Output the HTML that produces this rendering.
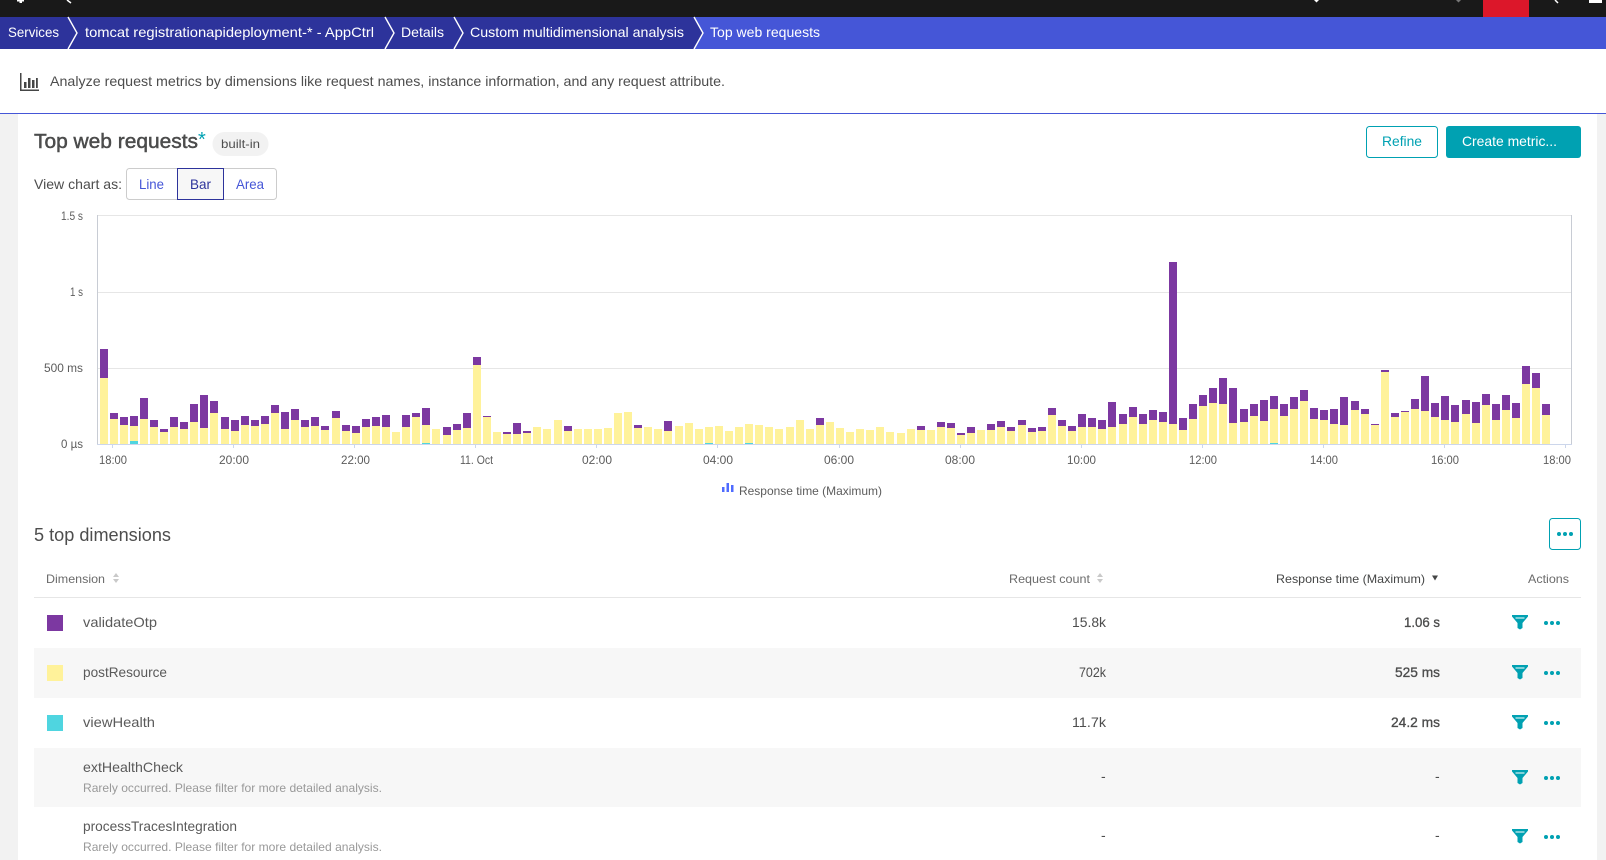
<!DOCTYPE html>
<html lang="en">
<head>
<meta charset="utf-8">
<title>Top web requests</title>
<style>
html,body{margin:0;padding:0;background:#fff;width:1606px;height:860px;overflow:hidden}
svg{display:block}
text{font-family:"Liberation Sans",sans-serif;fill:#4d4d4d;font-size:14px;white-space:pre}
.bc{fill:#fff}
.ax{font-size:12px;fill:#5c5c5c}
.hd{font-size:12px;fill:#6b6b6b}
.sub{font-size:12px;fill:#999}
.dim{fill:#5a5a5a}
.med{stroke:#454646;stroke-width:.3px}
</style>
</head>
<body>
<svg xmlns="http://www.w3.org/2000/svg" width="1606" height="860" viewBox="0 0 1606 860">
<defs>
<g id="fn"><path fill="#00a1b2" d="M0 0H16V1.5L10.5 8V13L8 14.5L5.5 13V8L0 1.5Z"/><path stroke="#fff" stroke-width="1" d="M3.5 3H12.5"/></g>
<g id="dots" fill="#00a1b2"><circle cx="2" cy="0" r="2"/><circle cx="8" cy="0" r="2"/><circle cx="14" cy="0" r="2"/></g>
<g id="srt" fill="#c9c9c9"><path d="M0 4L3 0L6 4Z"/><path d="M0 6L3 10L6 6Z"/></g>
</defs>

<!-- page background -->
<rect width="1606" height="860" fill="#f2f2f2"/>
<rect x="18" y="113" width="1579" height="747" fill="#fff"/>

<!-- top bar -->
<rect width="1606" height="17" fill="#191919"/>
<path fill="#fff" d="M17 0H24V1.5H22V3H19.5V1.5H17Z"/>
<path stroke="#fff" stroke-width="1.5" fill="none" d="M67 0L71 3"/>
<path fill="#fff" d="M1314 0H1319L1316.5 2.5Z"/>
<path fill="#777" d="M1456 0H1461L1458.5 2.5Z"/>
<rect x="1483" width="46" height="17" fill="#dc172a"/>
<path stroke="#fff" stroke-width="1.5" fill="none" d="M1555 0L1558 3"/>
<path fill="#fff" d="M1589 0H1602V3H1589Z"/>

<!-- breadcrumb -->
<rect y="17" width="1606" height="32" fill="#4556d7"/>
<path fill="#2d339b" d="M0 17H694L703 33L694 49H0Z"/>
<g fill="none" stroke="#fff" stroke-width="1.4">
<path d="M68 17L77 33L68 49"/>
<path d="M385 17L394 33L385 49"/>
<path d="M454 17L463 33L454 49"/>
<path d="M694 17L703 33L694 49"/>
</g>
<text class="bc" x="8" y="37" textLength="51" lengthAdjust="spacingAndGlyphs">Services</text>
<text class="bc" x="85" y="37" textLength="289" lengthAdjust="spacingAndGlyphs">tomcat registrationapideployment-* - AppCtrl</text>
<text class="bc" x="401" y="37" textLength="43" lengthAdjust="spacingAndGlyphs">Details</text>
<text class="bc" x="470" y="37" textLength="214" lengthAdjust="spacingAndGlyphs">Custom multidimensional analysis</text>
<text class="bc" x="710" y="37" textLength="110" lengthAdjust="spacingAndGlyphs">Top web requests</text>

<!-- description -->
<rect y="49" width="1606" height="64" fill="#fff"/>
<g fill="#454646">
<rect x="20" y="73" width="1.5" height="18"/><rect x="20" y="89.5" width="19" height="1.5"/>
<rect x="24" y="82" width="2.5" height="6"/><rect x="28" y="78" width="2.5" height="10"/><rect x="32" y="80" width="2.5" height="8"/><rect x="36" y="78" width="1.8" height="10"/>
</g>
<text x="50" y="86" textLength="675" lengthAdjust="spacingAndGlyphs">Analyze request metrics by dimensions like request names, instance information, and any request attribute.</text>
<rect y="113" width="1606" height="1" fill="#4556d7"/>

<!-- title row -->
<text x="34" y="148" class="med" style="font-size:20px;stroke-width:.45px" textLength="164" lengthAdjust="spacingAndGlyphs">Top web requests</text>
<text x="198" y="146" style="font-size:20px;fill:#00a1b2">*</text>
<rect x="212.5" y="132" width="56" height="24" rx="12" fill="#f2f2f2"/>
<text x="221" y="148" style="font-size:12px" textLength="39" lengthAdjust="spacingAndGlyphs">built-in</text>

<rect x="1366.5" y="126.5" width="71" height="31" rx="3" fill="#fff" stroke="#00a1b2"/>
<text x="1382" y="146" style="fill:#00a1b2" textLength="40" lengthAdjust="spacingAndGlyphs">Refine</text>
<rect x="1446" y="126" width="135" height="32" rx="3" fill="#00a1b2"/>
<text x="1462" y="146" style="fill:#fff" textLength="95" lengthAdjust="spacingAndGlyphs">Create metric...</text>

<!-- view chart as -->
<text x="34" y="189" textLength="88" lengthAdjust="spacingAndGlyphs">View chart as:</text>
<rect x="126.5" y="168.5" width="150" height="31" rx="3" fill="#fff" stroke="#ccc"/>
<rect x="177.5" y="168.5" width="46" height="31" fill="#f7f7f7" stroke="#2d339b"/>
<text x="139" y="189" style="fill:#4556d7" textLength="25" lengthAdjust="spacingAndGlyphs">Line</text>
<text x="190" y="189" style="fill:#2d339b" textLength="21" lengthAdjust="spacingAndGlyphs">Bar</text>
<text x="236" y="189" style="fill:#4556d7" textLength="28" lengthAdjust="spacingAndGlyphs">Area</text>

<!-- chart grid -->
<g fill="none">
<path stroke="#e6e6e6" d="M97 215.5H1571M97 292.5H1571M97 368.5H1571"/>
<path stroke="#c8ccd4" d="M97.5 215V444M1571.5 215V444"/>
<path stroke="#ccd6eb" d="M97 444.5H1572M112.5 444V448M233.5 444V448M354.5 444V448M475.5 444V448M596.5 444V448M717.5 444V448M839.5 444V448M960.5 444V448M1081.5 444V448M1202.5 444V448M1323.5 444V448M1444.5 444V448M1565.5 444V448"/>
</g>

<!-- bars: heights in 1/3 px -->
<g transform="translate(0,444) scale(1,0.33333)">
<path fill="#7c38a1" d="M100 0v-285h8V0zM110 0v-93h8V0zM120 0v-81h8V0zM130 0v-84h8V0zM140 0v-138h8V0zM150 0v-72h8V0zM160 0v-45h8V0zM170 0v-81h8V0zM180 0v-66h8V0zM190 0v-120h8V0zM200 0v-147h8V0zM210 0v-129h8V0zM221 0v-81h8V0zM231 0v-72h8V0zM241 0v-84h8V0zM251 0v-72h8V0zM261 0v-84h8V0zM271 0v-117h8V0zM281 0v-96h8V0zM291 0v-105h8V0zM301 0v-72h8V0zM311 0v-81h8V0zM321 0v-54h8V0zM332 0v-99h8V0zM342 0v-57h8V0zM352 0v-54h8V0zM362 0v-75h8V0zM372 0v-81h8V0zM382 0v-87h8V0zM402 0v-87h8V0zM412 0v-93h8V0zM422 0v-108h8V0zM443 0v-51h8V0zM453 0v-60h8V0zM463 0v-93h8V0zM473 0v-261h8V0zM483 0v-84h8V0zM503 0v-36h8V0zM513 0v-63h8V0zM523 0v-39h8V0zM564 0v-54h8V0zM634 0v-57h8V0zM664 0v-69h8V0zM816 0v-78h8V0zM917 0v-54h8V0zM937 0v-66h8V0zM947 0v-63h8V0zM957 0v-33h8V0zM967 0v-51h8V0zM987 0v-60h8V0zM997 0v-69h8V0zM1007 0v-51h8V0zM1018 0v-72h8V0zM1028 0v-48h8V0zM1038 0v-51h8V0zM1048 0v-108h8V0zM1058 0v-72h8V0zM1068 0v-54h8V0zM1078 0v-90h8V0zM1088 0v-78h8V0zM1098 0v-72h8V0zM1108 0v-126h8V0zM1119 0v-90h8V0zM1129 0v-111h8V0zM1139 0v-90h8V0zM1149 0v-102h8V0zM1159 0v-96h8V0zM1169 0v-546h8V0zM1179 0v-78h8V0zM1189 0v-120h8V0zM1199 0v-147h8V0zM1209 0v-168h8V0zM1219 0v-198h8V0zM1229 0v-168h8V0zM1240 0v-105h8V0zM1250 0v-120h8V0zM1260 0v-132h8V0zM1270 0v-144h8V0zM1280 0v-120h8V0zM1290 0v-141h8V0zM1300 0v-162h8V0zM1310 0v-108h8V0zM1320 0v-102h8V0zM1330 0v-105h8V0zM1340 0v-141h8V0zM1351 0v-129h8V0zM1361 0v-105h8V0zM1371 0v-60h8V0zM1381 0v-222h8V0zM1391 0v-93h8V0zM1401 0v-99h8V0zM1411 0v-135h8V0zM1421 0v-204h8V0zM1431 0v-123h8V0zM1441 0v-144h8V0zM1451 0v-117h8V0zM1462 0v-132h8V0zM1472 0v-126h8V0zM1482 0v-150h8V0zM1492 0v-120h8V0zM1502 0v-147h8V0zM1512 0v-123h8V0zM1522 0v-234h8V0zM1532 0v-213h8V0zM1542 0v-120h8V0z"/>
<path fill="#fff29a" d="M100 0v-198h8V0zM110 0v-75h8V0zM120 0v-57h8V0zM130 0v-54h8V0zM140 0v-75h8V0zM150 0v-51h8V0zM160 0v-36h8V0zM170 0v-51h8V0zM180 0v-45h8V0zM190 0v-66h8V0zM200 0v-48h8V0zM210 0v-93h8V0zM221 0v-45h8V0zM231 0v-39h8V0zM241 0v-57h8V0zM251 0v-54h8V0zM261 0v-60h8V0zM271 0v-93h8V0zM281 0v-45h8V0zM291 0v-72h8V0zM301 0v-51h8V0zM311 0v-54h8V0zM321 0v-42h8V0zM332 0v-78h8V0zM342 0v-39h8V0zM352 0v-33h8V0zM362 0v-51h8V0zM372 0v-54h8V0zM382 0v-51h8V0zM392 0v-36h8V0zM402 0v-51h8V0zM412 0v-81h8V0zM422 0v-57h8V0zM432 0v-45h8V0zM443 0v-27h8V0zM453 0v-42h8V0zM463 0v-48h8V0zM473 0v-237h8V0zM483 0v-81h8V0zM493 0v-36h8V0zM503 0v-30h8V0zM513 0v-30h8V0zM523 0v-33h8V0zM533 0v-51h8V0zM543 0v-45h8V0zM554 0v-72h8V0zM564 0v-39h8V0zM574 0v-45h8V0zM584 0v-45h8V0zM594 0v-45h8V0zM604 0v-48h8V0zM614 0v-93h8V0zM624 0v-96h8V0zM634 0v-48h8V0zM644 0v-51h8V0zM654 0v-45h8V0zM664 0v-39h8V0zM675 0v-54h8V0zM685 0v-63h8V0zM695 0v-45h8V0zM705 0v-51h8V0zM715 0v-54h8V0zM725 0v-39h8V0zM735 0v-51h8V0zM745 0v-60h8V0zM755 0v-57h8V0zM765 0v-51h8V0zM775 0v-45h8V0zM786 0v-51h8V0zM796 0v-72h8V0zM806 0v-45h8V0zM816 0v-57h8V0zM826 0v-66h8V0zM836 0v-48h8V0zM846 0v-36h8V0zM856 0v-45h8V0zM866 0v-42h8V0zM876 0v-51h8V0zM886 0v-36h8V0zM897 0v-33h8V0zM907 0v-45h8V0zM917 0v-42h8V0zM927 0v-42h8V0zM937 0v-51h8V0zM947 0v-48h8V0zM957 0v-27h8V0zM967 0v-33h8V0zM977 0v-42h8V0zM987 0v-42h8V0zM997 0v-51h8V0zM1007 0v-39h8V0zM1018 0v-57h8V0zM1028 0v-36h8V0zM1038 0v-39h8V0zM1048 0v-87h8V0zM1058 0v-54h8V0zM1068 0v-39h8V0zM1078 0v-51h8V0zM1088 0v-51h8V0zM1098 0v-45h8V0zM1108 0v-51h8V0zM1119 0v-60h8V0zM1129 0v-81h8V0zM1139 0v-60h8V0zM1149 0v-72h8V0zM1159 0v-66h8V0zM1169 0v-60h8V0zM1179 0v-42h8V0zM1189 0v-75h8V0zM1199 0v-114h8V0zM1209 0v-123h8V0zM1219 0v-120h8V0zM1229 0v-63h8V0zM1240 0v-66h8V0zM1250 0v-84h8V0zM1260 0v-69h8V0zM1270 0v-105h8V0zM1280 0v-84h8V0zM1290 0v-105h8V0zM1300 0v-129h8V0zM1310 0v-75h8V0zM1320 0v-72h8V0zM1330 0v-60h8V0zM1340 0v-57h8V0zM1351 0v-102h8V0zM1361 0v-90h8V0zM1371 0v-57h8V0zM1381 0v-216h8V0zM1391 0v-81h8V0zM1401 0v-96h8V0zM1411 0v-105h8V0zM1421 0v-99h8V0zM1431 0v-81h8V0zM1441 0v-72h8V0zM1451 0v-66h8V0zM1462 0v-90h8V0zM1472 0v-63h8V0zM1482 0v-117h8V0zM1492 0v-72h8V0zM1502 0v-102h8V0zM1512 0v-78h8V0zM1522 0v-180h8V0zM1532 0v-168h8V0zM1542 0v-87h8V0z"/>
<path fill="#4fd5e0" d="M130 0v-9h8V0zM422 0v-3h8V0zM705 0v-3h8V0zM745 0v-3h8V0zM1270 0v-3h8V0z"/>
</g>

<!-- axis labels -->
<text class="ax" x="61" y="220" textLength="22" lengthAdjust="spacingAndGlyphs">1.5 s</text>
<text class="ax" x="70" y="296" textLength="13" lengthAdjust="spacingAndGlyphs">1 s</text>
<text class="ax" x="44" y="372" textLength="39" lengthAdjust="spacingAndGlyphs">500 ms</text>
<text class="ax" x="61" y="448" textLength="22" lengthAdjust="spacingAndGlyphs">0 µs</text>
<text class="ax" x="99" y="464" textLength="28" lengthAdjust="spacingAndGlyphs">18:00</text>
<text class="ax" x="219" y="464" textLength="30" lengthAdjust="spacingAndGlyphs">20:00</text>
<text class="ax" x="341" y="464" textLength="29" lengthAdjust="spacingAndGlyphs">22:00</text>
<text class="ax" x="460" y="464" textLength="33" lengthAdjust="spacingAndGlyphs">11. Oct</text>
<text class="ax" x="582" y="464" textLength="30" lengthAdjust="spacingAndGlyphs">02:00</text>
<text class="ax" x="703" y="464" textLength="30" lengthAdjust="spacingAndGlyphs">04:00</text>
<text class="ax" x="824" y="464" textLength="30" lengthAdjust="spacingAndGlyphs">06:00</text>
<text class="ax" x="945" y="464" textLength="30" lengthAdjust="spacingAndGlyphs">08:00</text>
<text class="ax" x="1067" y="464" textLength="29" lengthAdjust="spacingAndGlyphs">10:00</text>
<text class="ax" x="1189" y="464" textLength="28" lengthAdjust="spacingAndGlyphs">12:00</text>
<text class="ax" x="1310" y="464" textLength="28" lengthAdjust="spacingAndGlyphs">14:00</text>
<text class="ax" x="1431" y="464" textLength="28" lengthAdjust="spacingAndGlyphs">16:00</text>
<text class="ax" x="1543" y="464" textLength="28" lengthAdjust="spacingAndGlyphs">18:00</text>

<!-- legend -->
<g fill="#4f6bff"><rect x="722" y="487" width="2.5" height="5"/><rect x="726.5" y="483" width="2.5" height="9"/><rect x="731" y="485" width="2.5" height="7"/></g>
<text class="ax" x="739" y="495" textLength="143" lengthAdjust="spacingAndGlyphs">Response time (Maximum)</text>

<!-- table heading -->
<text x="34" y="541" style="font-size:18px" textLength="137" lengthAdjust="spacingAndGlyphs">5 top dimensions</text>
<rect x="1549.5" y="518.5" width="31" height="31" rx="3" fill="#fff" stroke="#00a1b2"/>
<use href="#dots" x="1557" y="534"/>

<text class="hd" x="46" y="583" textLength="59" lengthAdjust="spacingAndGlyphs">Dimension</text>
<use href="#srt" x="113" y="573"/>
<text class="hd" x="1009" y="583" textLength="81" lengthAdjust="spacingAndGlyphs">Request count</text>
<use href="#srt" x="1097" y="573"/>
<text class="hd" x="1276" y="583" style="fill:#454646" textLength="149" lengthAdjust="spacingAndGlyphs">Response time (Maximum)</text>
<path fill="#454646" d="M1432 575.5H1438L1435 580.5Z"/>
<text class="hd" x="1528" y="583" textLength="41" lengthAdjust="spacingAndGlyphs">Actions</text>
<rect x="34" y="597" width="1547" height="1" fill="#e6e6e6"/>

<!-- rows -->
<rect x="34" y="648" width="1547" height="50" fill="#f7f7f7"/>
<rect x="34" y="748" width="1547" height="59" fill="#f7f7f7"/>
<rect x="47" y="615" width="16" height="16" fill="#7c38a1"/>
<rect x="47" y="665" width="16" height="16" fill="#fff29a"/>
<rect x="47" y="715" width="16" height="16" fill="#4fd5e0"/>

<text class="dim" x="83" y="627" textLength="74" lengthAdjust="spacingAndGlyphs">validateOtp</text>
<text class="dim" x="83" y="677" textLength="84" lengthAdjust="spacingAndGlyphs">postResource</text>
<text class="dim" x="83" y="727" textLength="72" lengthAdjust="spacingAndGlyphs">viewHealth</text>
<text class="dim" x="83" y="772" textLength="100" lengthAdjust="spacingAndGlyphs">extHealthCheck</text>
<text class="sub" x="83" y="792" textLength="299" lengthAdjust="spacingAndGlyphs">Rarely occurred. Please filter for more detailed analysis.</text>
<text class="dim" x="83" y="831" textLength="154" lengthAdjust="spacingAndGlyphs">processTracesIntegration</text>
<text class="sub" x="83" y="851" textLength="299" lengthAdjust="spacingAndGlyphs">Rarely occurred. Please filter for more detailed analysis.</text>

<text x="1072" y="627" textLength="34" lengthAdjust="spacingAndGlyphs">15.8k</text>
<text x="1079" y="677" textLength="27" lengthAdjust="spacingAndGlyphs">702k</text>
<text x="1072" y="727" textLength="34" lengthAdjust="spacingAndGlyphs">11.7k</text>
<text x="1101" y="781">-</text>
<text x="1101" y="840">-</text>

<text class="med" x="1404" y="627" textLength="36" lengthAdjust="spacingAndGlyphs">1.06 s</text>
<text class="med" x="1395" y="677" textLength="45" lengthAdjust="spacingAndGlyphs">525 ms</text>
<text class="med" x="1391" y="727" textLength="49" lengthAdjust="spacingAndGlyphs">24.2 ms</text>
<text x="1435" y="781">-</text>
<text x="1435" y="840">-</text>

<use href="#fn" x="1512" y="615"/><use href="#dots" x="1544" y="623"/>
<use href="#fn" x="1512" y="665"/><use href="#dots" x="1544" y="673"/>
<use href="#fn" x="1512" y="715"/><use href="#dots" x="1544" y="723"/>
<use href="#fn" x="1512" y="770"/><use href="#dots" x="1544" y="778"/>
<use href="#fn" x="1512" y="829"/><use href="#dots" x="1544" y="837"/>
</svg>
</body>
</html>
